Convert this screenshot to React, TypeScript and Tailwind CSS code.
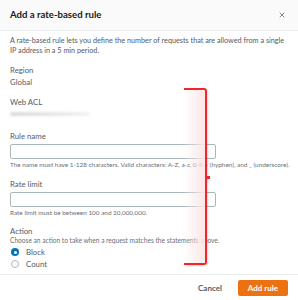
import { X } from "lucide-react";

function Field({ label, help }: { label: string; help: string }) {
  return (
    <div className="flex flex-col">
      <p className="text-[7.8px] leading-[8px] text-[#545b64]">{label}</p>
      <div className="mt-[4px] h-[15px] w-[206px] rounded-[2px] border border-[#aab7b8] bg-white" />
      <p className="mt-[2px] whitespace-nowrap text-[6.4px] leading-[8px] text-[#687078]">{help}</p>
    </div>
  );
}

export default function App() {
  return (
    <div className="relative h-[300px] w-[298px] overflow-hidden bg-white font-['Lato',sans-serif] text-[#16191f]">
      <div className="flex h-[31px] items-center justify-between border-b border-[#eaeded] bg-[#fafafa] pl-[10px] pr-[12px]">
        <h2 className="text-[9.6px] font-bold text-[#16191f]">Add a rate-based rule</h2>
        <X className="h-[8px] w-[8px] text-[#687078]" strokeWidth={2.5} />
      </div>

      <div className="flex flex-col px-[10px] pt-[5px]">
        <p className="max-w-[276px] text-[7.25px] leading-[10px] text-[#545b64]">
          A rate-based rule lets you define the number of requests that are allowed from a single IP address in a 5 min period.
        </p>

        <div className="mt-[9px] flex flex-col">
          <p className="text-[7.8px] leading-[11px] text-[#545b64]">Region</p>
          <p className="mt-[1px] text-[7.8px] leading-[11px] text-[#545b64]">Global</p>
        </div>

        <div className="mt-[9px] flex flex-col">
          <p className="text-[7.8px] leading-[11px] text-[#545b64]">Web ACL</p>
          <div className="mt-[4px] h-[4px] w-[80px] rounded-full bg-gradient-to-r from-[#dcdcdc] via-[#e6e6e6] to-[#f3f3f3] blur-[1px]" />
        </div>

        <div className="mt-[16px]">
          <Field
            label="Rule name"
            help="The name must have 1-128 characters. Valid characters: A-Z, a-z, 0-9, - (hyphen), and _ (underscore)."
          />
        </div>

        <div className="mt-[11px]">
          <Field label="Rate limit" help="Rate limit must be between 100 and 20,000,000." />
        </div>

        <div className="mt-[9px] flex flex-col">
          <p className="text-[7.8px] leading-[10px] text-[#545b64]">Action</p>
          <p className="whitespace-nowrap text-[6.6px] leading-[9px] text-[#687078]">Choose an action to take when a request matches the statements above.</p>
          <div className="mt-[1px] flex items-center gap-[7px] pl-[1px]">
            <span className="flex h-[8px] w-[8px] items-center justify-center rounded-full bg-[#0073bb]">
              <span className="h-[3px] w-[3px] rounded-full bg-white" />
            </span>
            <span className="text-[7.8px] leading-[12px] text-[#545b64]">Block</span>
          </div>
          <div className="flex items-center gap-[7px] pl-[1px]">
            <span className="h-[8px] w-[8px] rounded-full border border-[#aab7b8] bg-white" />
            <span className="text-[7.8px] leading-[12px] text-[#545b64]">Count</span>
          </div>
        </div>
      </div>

      <div className="absolute inset-x-0 bottom-0 flex h-[26px] items-center justify-end gap-[16px] border-t border-[#eaeded] pr-[10px]">
        <span className="text-[8px] font-bold text-[#545b64]">Cancel</span>
        <button className="flex h-[16px] w-[50px] items-center justify-center rounded-[2px] bg-[#ec7211] text-[8px] font-bold text-white">
          Add rule
        </button>
      </div>

      <div className="pointer-events-none absolute left-[184px] top-[88px] h-[177px] w-[23px] rounded-r-[3px] border-y-2 border-r-2 border-[#f0262a] bg-gradient-to-r from-transparent to-[#fbe5e6] shadow-[1px_1px_2px_rgba(0,0,0,0.15)]">
        <span className="absolute right-[-5px] top-[86px] h-[3px] w-[3px] bg-[#f0262a]" />
      </div>
    </div>
  );
}
